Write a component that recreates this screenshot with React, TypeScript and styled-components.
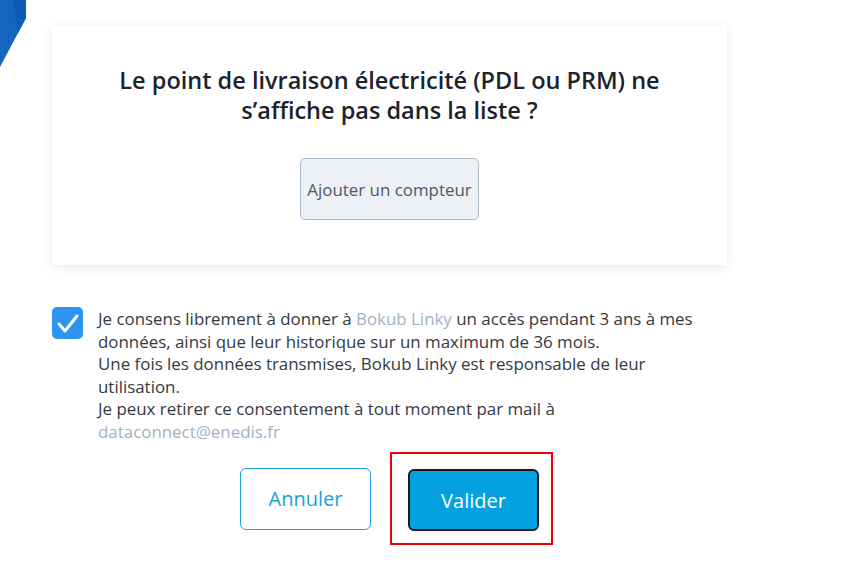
import styled, { createGlobalStyle } from 'styled-components';

const GlobalStyle = createGlobalStyle`
  body {
    margin: 0;
    background: #ffffff;
    font-family: 'Open Sans', 'Noto Sans', sans-serif;
  }
`;

const Corner = () => (
  <CornerSvg width="30" height="70" viewBox="0 0 30 70">
    <polygon points="0,0 26,0 26,18 0,67" fill="#1565c0" />
    <polygon points="12,0 26,0 26,18 18,33 12,0" fill="#0d5cb5" />
  </CornerSvg>
);

const CheckIcon = () => (
  <CheckSvg width="31" height="32" viewBox="0 0 31 32">
    <rect x="0" y="0" width="31" height="32" rx="5" fill="#2d95f0" />
    <path d="M7 17 L13 24 L25 9" stroke="#fff" strokeWidth="3" fill="none" strokeLinecap="round" strokeLinejoin="round" />
  </CheckSvg>
);

export default function App() {
  return (
    <Page>
      <GlobalStyle />
      <Corner />
      <Card>
        <Heading>
          Le point de livraison électricité (PDL ou PRM) ne
          <br />
          s’affiche pas dans la liste ?
        </Heading>
        <AddButton>Ajouter un compteur</AddButton>
      </Card>
      <Consent>
        <CheckIcon />
        <ConsentText>
          Je consens librement à donner à <Link>Bokub Linky</Link> un accès pendant 3 ans à mes
          données, ainsi que leur historique sur un maximum de 36 mois.
          <br />
          Une fois les données transmises, Bokub Linky est responsable de leur utilisation.
          <br />
          Je peux retirer ce consentement à tout moment par mail à <Link>dataconnect@enedis.fr</Link>
        </ConsentText>
      </Consent>
      <Actions>
        <Button>Annuler</Button>
        <Highlight>
          <Button primary>Valider</Button>
        </Highlight>
      </Actions>
    </Page>
  );
}

const Page = styled.div`
  position: relative;
  width: 853px;
  height: 575px;
  overflow: hidden;
  padding: 25px 0 0 52px;
  box-sizing: border-box;
`;

const CornerSvg = styled.svg`
  position: absolute;
  top: 0;
  left: 0;
`;

const CheckSvg = styled.svg`
  flex-shrink: 0;
`;

const Card = styled.div`
  width: 675px;
  height: 240px;
  box-sizing: border-box;
  background: #fff;
  box-shadow: 0 2px 10px rgba(0, 0, 0, 0.09);
  display: flex;
  flex-direction: column;
  align-items: center;
  padding-top: 40px;
`;

const Heading = styled.h2`
  margin: 0;
  font-size: 23.5px;
  font-weight: 600;
  line-height: 30px;
  color: #1d232c;
  text-align: center;
`;

const AddButton = styled.button`
  margin-top: 33px;
  width: 179px;
  height: 62px;
  background: #edf0f4;
  border: 1px solid #abbac8;
  border-radius: 5px;
  color: #4b5a6b;
  font-family: inherit;
  font-size: 16.9px;
  padding: 0;
`;

const Consent = styled.div`
  display: flex;
  align-items: flex-start;
  gap: 15px;
  margin-top: 42px;
`;

const ConsentText = styled.p`
  width: 620px;
  margin: 0;
  padding-top: 1px;
  font-size: 16.9px;
  line-height: 22.5px;
  color: #343a40;
`;

const Link = styled.span`
  color: #9fb2c6;
`;

const Actions = styled.div`
  display: flex;
  align-items: center;
  gap: 19px;
  margin-top: 9px;
  padding-left: 188px;
`;

const Highlight = styled.div`
  border: 2px solid #e8000b;
  padding: 15px 12px 12px 16px;
`;

const Button = styled.button<{ primary?: boolean }>`
  width: 131px;
  height: 62px;
  border-radius: 6px;
  font-family: inherit;
  font-size: 20px;
  padding: 0;
  background: ${p => (p.primary ? '#03a1e0' : '#fff')};
  color: ${p => (p.primary ? '#fff' : '#1a9fdb')};
  border: ${p => (p.primary ? '2px solid #1b1b1b' : '1px solid #1aa0dc')};
`;
